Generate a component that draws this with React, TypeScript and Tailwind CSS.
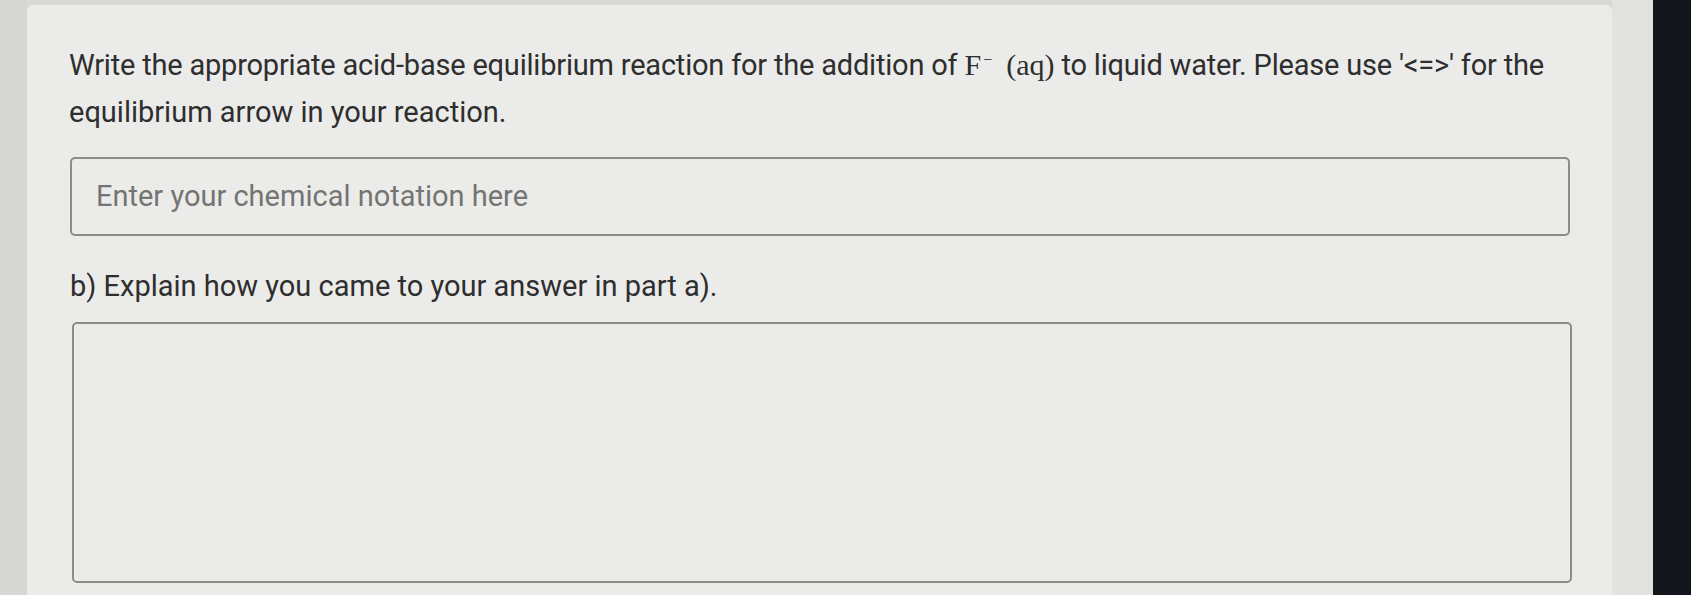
import React from "react";

export default function App() {
  return (
    <div className="flex h-[595px] w-[1691px] overflow-hidden bg-[#d8d8d6]" style={{ fontFamily: "Roboto, 'Noto Sans', sans-serif" }}>
      <div className="w-[27px] shrink-0 bg-[#d6d6d4]" />
      <div className="mt-[5px] flex w-[1585px] shrink-0 flex-col rounded-tl-[6px] rounded-tr-[6px] bg-[#ebebe9] pl-[43px] pr-[42px] pt-[38px]">
        <p className="-ml-[1px] text-[29px] leading-[43px] text-[#2e2e2e]">
          <span className="tracking-[-0.2px]">
            Write the appropriate acid-base equilibrium reaction for the addition of{" "}
            <span style={{ fontFamily: "'Liberation Serif', 'DejaVu Serif', serif" }} className="text-[30px] tracking-normal">
              F<span className="relative -top-[10px] ml-[2px] text-[16px]">−</span>
              <span className="ml-[14px]">(aq)</span>
            </span>{" "}
            to liquid water. Please use '&lt;=&gt;' for the
          </span>
          <br />
          equilibrium arrow in your reaction.
        </p>
        <div className="mt-[23px] flex h-[79px] items-center rounded-[5px] border-[2px] border-[#8c8c8a] bg-[#ebebe9] px-[24px]">
          <span className="text-[29px] text-[#747472]">Enter your chemical notation here</span>
        </div>
        <p className="mt-[29px] text-[29px] leading-[43px] text-[#2e2e2e]">b) Explain how you came to your answer in part a).</p>
        <div className="mt-[14px] ml-[2px] -mr-[2px] h-[261px] rounded-[5px] border-[2px] border-[#8c8c8a] bg-[#ebebe9]" />
      </div>
      <div className="w-[41px] shrink-0 bg-[#e2e2e0]" />
      <div className="flex-1 bg-[#14161d]" />
    </div>
  );
}
